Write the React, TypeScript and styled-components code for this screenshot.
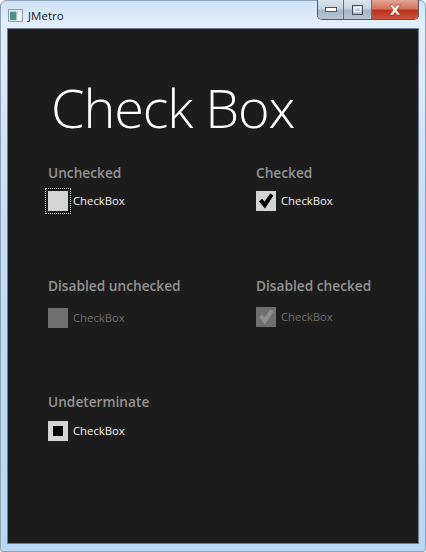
import React from "react";
import styled, { createGlobalStyle } from "styled-components";

const Global = createGlobalStyle`
  html, body { margin: 0; padding: 0; background: #fff; }
  #root { width: 426px; height: 552px; overflow: hidden; }
`;

const Frame = styled.div`
  position: relative;
  box-sizing: border-box;
  width: 426px;
  height: 552px;
  padding: 0 6px 7px;
  display: flex;
  flex-direction: column;
  background: linear-gradient(180deg, #cfe3f6 0%, #e2eefb 4%, #c4def7 40%, #b9d7f5 100%);
  border: 1px solid #8ea3b5;
  border-radius: 6px 6px 3px 3px;
  font-family: "Open Sans", "Noto Sans", sans-serif;
`;

const TitleBar = styled.div`
  height: 27px;
  flex: none;
  display: flex;
  align-items: center;
  gap: 5px;
  padding-left: 1px;
`;

const AppIcon = styled.svg`
  width: 15px;
  height: 13px;
  margin-top: 1px;
`;

const WindowTitle = styled.span`
  font-size: 11.5px;
  color: #15202b;
  margin-top: 1px;
`;

const Controls = styled.div`
  position: absolute;
  top: -1px;
  right: 6px;
  width: 102px;
  height: 20px;
  display: flex;
  box-sizing: border-box;
  border: 1px solid #4f5d6b;
  border-top: none;
  border-radius: 0 0 5px 5px;
  overflow: hidden;
`;

const Control = styled.div<{ $w: number; $close?: boolean }>`
  width: ${(p) => p.$w}px;
  display: flex;
  align-items: center;
  justify-content: center;
  box-sizing: border-box;
  border-right: ${(p) => (p.$close ? "none" : "1px solid #5f6f7f")};
  background: ${(p) =>
    p.$close
      ? "linear-gradient(180deg, #e3a497 0%, #d2755f 45%, #bd3218 55%, #c9523a 100%)"
      : "linear-gradient(180deg, #d9e4ee 0%, #c6d3df 48%, #a4b5c5 52%, #b6c6d5 100%)"};
`;

const Panel = styled.main`
  flex: 1;
  box-sizing: border-box;
  background: #1c1c1c;
  border: 1px solid #6b7d8e;
  padding: 40px 0 0 40px;
  color: #fff;
`;

const Heading = styled.h1`
  margin: 0 0 0 3px;
  font-family: "Open Sans", "Noto Sans", sans-serif;
  font-weight: 300;
  font-size: 54px;
  line-height: 76px;
  letter-spacing: -1.1px;
  color: #fff;
`;

const Grid = styled.div`
  display: grid;
  grid-template-columns: 208px 1fr;
  grid-template-rows: 113px 116px auto;
  margin-top: 18px;
`;

const Cell = styled.section`
  display: flex;
  flex-direction: column;
  align-items: flex-start;
`;

const Label = styled.h2`
  margin: 0 0 9px;
  font-family: "Open Sans", "Noto Sans", sans-serif;
  font-size: 13.7px;
  font-weight: 600;
  line-height: 19px;
  color: #939393;
  white-space: nowrap;
`;

const Row = styled.div<{ $off?: number }>`
  display: flex;
  align-items: center;
  gap: 5px;
  margin-top: ${(p) => p.$off ?? 0}px;
`;

const Box = styled.div<{ $disabled?: boolean; $focus?: boolean }>`
  position: relative;
  width: 20px;
  height: 20px;
  display: flex;
  align-items: center;
  justify-content: center;
  background: ${(p) => (p.$disabled ? "#6f6f6f" : "#d4d4d4")};
  ${(p) =>
    p.$focus
      ? `outline: 1px dotted #e0e0e0; outline-offset: 2px;`
      : ""}
`;

const Mark = styled.div`
  width: 10px;
  height: 10px;
  background: #000;
`;

const CheckText = styled.span<{ $disabled?: boolean }>`
  font-family: "Open Sans", "Noto Sans", sans-serif;
  font-size: 11.3px;
  line-height: 20px;
  color: ${(p) => (p.$disabled ? "#6c6c6c" : "#f2f2f2")};
`;

const Tick = ({ color }: { color: string }) => (
  <svg width="18" height="18" viewBox="0 0 18 18">
    <path d="M2 9.5 L5 6.8 L7.6 9.6 L13.2 1.6 L16.4 3.6 L8 16.6 Z" fill={color} />
  </svg>
);

export default function App() {
  return (
    <Frame>
      <Global />
      <TitleBar>
        <AppIcon viewBox="0 0 16 14">
          <rect x="0.5" y="0.5" width="15" height="13" fill="#dfe7ea" stroke="#8a9aa2" />
          <rect x="2" y="3" width="7" height="9" fill="#4f8f8c" />
          <rect x="10" y="3" width="4" height="9" fill="#f4f7f8" />
        </AppIcon>
        <WindowTitle>JMetro</WindowTitle>
      </TitleBar>
      <Controls>
        <Control $w={27}>
          <svg width="12" height="5" viewBox="0 0 12 5">
            <rect x="0.5" y="0.5" width="11" height="4" fill="#fff" stroke="#4a5a68" />
          </svg>
        </Control>
        <Control $w={28}>
          <svg width="11" height="10" viewBox="0 0 11 10">
            <rect x="0.5" y="0.5" width="10" height="9" fill="none" stroke="#3f4f5e" />
            <rect x="2.5" y="2.5" width="6" height="4" fill="none" stroke="#f2f6f9" strokeWidth="1.5" />
          </svg>
        </Control>
        <Control $w={47} $close>
          <svg width="14" height="12" viewBox="0 0 14 12">
            <path d="M1.5 1 H5 L7 3.6 L9 1 H12.5 L8.8 6 L12.5 11 H9 L7 8.4 L5 11 H1.5 L5.2 6 Z" fill="#f6efec" stroke="#7d2d1f" strokeWidth="0.5" />
          </svg>
        </Control>
      </Controls>
      <Panel>
        <Heading>Check Box</Heading>
        <Grid>
          <Cell>
            <Label>Unchecked</Label>
            <Row>
              <Box $focus />
              <CheckText>CheckBox</CheckText>
            </Row>
          </Cell>
          <Cell>
            <Label>Checked</Label>
            <Row>
              <Box><Tick color="#000" /></Box>
              <CheckText>CheckBox</CheckText>
            </Row>
          </Cell>
          <Cell>
            <Label>Disabled unchecked</Label>
            <Row $off={4}>
              <Box $disabled />
              <CheckText $disabled>CheckBox</CheckText>
            </Row>
          </Cell>
          <Cell>
            <Label>Disabled checked</Label>
            <Row $off={3}>
              <Box $disabled><Tick color="#8e8e8e" /></Box>
              <CheckText $disabled>CheckBox</CheckText>
            </Row>
          </Cell>
          <Cell>
            <Label>Undeterminate</Label>
            <Row $off={1}>
              <Box><Mark /></Box>
              <CheckText>CheckBox</CheckText>
            </Row>
          </Cell>
        </Grid>
      </Panel>
    </Frame>
  );
}
